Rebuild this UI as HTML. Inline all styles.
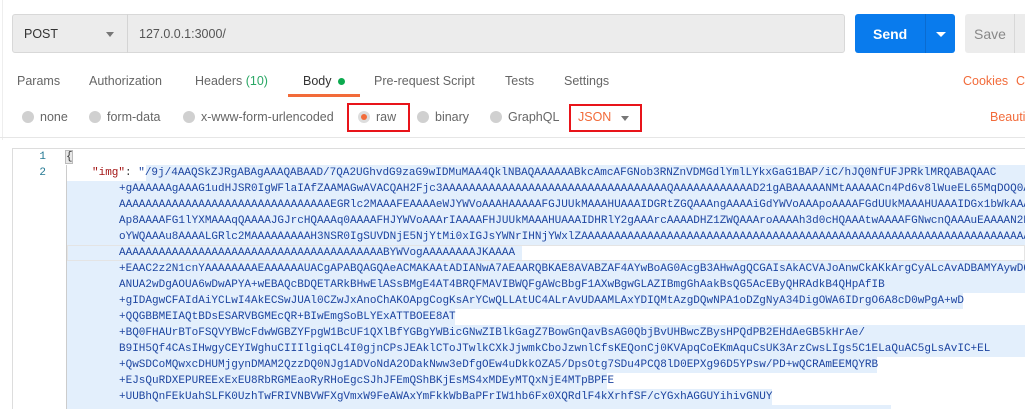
<!DOCTYPE html>
<html><head><meta charset="utf-8"><style>
*{margin:0;padding:0;box-sizing:border-box}
html,body{width:1025px;height:409px;overflow:hidden}
body{background:#fff;font-family:"Liberation Sans",sans-serif;position:relative;color:#505050}
#wrap{position:absolute;left:0;top:0;width:1025px;height:409px;overflow:hidden}
.a{position:absolute;white-space:nowrap}
.t{font-size:12.5px;color:#666}
.r{width:12px;height:12px;border-radius:50%;background:#d0d0d0;position:absolute}
.code{position:absolute;left:0;top:0;width:1025px;height:409px;overflow:hidden;font-family:"Liberation Mono",monospace;font-size:11px;color:#1d45a0}
.ln{position:absolute;height:16px;line-height:16px;white-space:nowrap}
.sel{position:absolute;height:16px;background:#e3effc}
.num{position:absolute;width:40px;text-align:right;font-family:"Liberation Mono",monospace;font-size:11px;color:#237893;line-height:16px}
</style></head><body><div id="wrap">
<div class="a" style="left:2px;top:0;width:1px;height:140px;background:#eee"></div>
<div class="a" style="left:12px;top:14px;width:833px;height:39px;background:#ececec;border:1px solid #d8d8d8;border-radius:3px"></div>
<div class="a" style="left:127px;top:14px;width:1px;height:39px;background:#d4d4d4"></div>
<div class="a" style="left:24px;top:27px;font-size:12.5px;color:#333">POST</div>
<div class="a" style="left:106px;top:32px;border-left:4px solid transparent;border-right:4px solid transparent;border-top:5px solid #777"></div>
<div class="a" style="left:139px;top:27px;font-size:12.5px;color:#555">127.0.0.1:3000/</div>
<div class="a" style="left:855px;top:14px;width:100px;height:39px;background:#097bed;border-radius:3px"></div>
<div class="a" style="left:925px;top:14px;width:1px;height:39px;background:#0a6bd0"></div>
<div class="a" style="left:873px;top:26px;font-size:14px;font-weight:bold;color:#fff">Send</div>
<div class="a" style="left:936px;top:32px;border-left:5px solid transparent;border-right:5px solid transparent;border-top:5px solid #fff"></div>
<div class="a" style="left:965px;top:14px;width:60px;height:39px;background:#ececec;border-radius:3px 0 0 3px"></div>
<div class="a" style="left:1014px;top:14px;width:1px;height:39px;background:#d8d8d8"></div>
<div class="a" style="left:974px;top:26px;font-size:14px;color:#888">Save</div>
<div class="a t" style="left:17px;top:74px">Params</div>
<div class="a t" style="left:89px;top:74px">Authorization</div>
<div class="a t" style="left:195px;top:74px">Headers <span style="color:#2aa765">(10)</span></div>
<div class="a t" style="left:303px;top:74px;color:#333">Body</div>
<div class="a" style="left:338px;top:78px;width:7px;height:7px;border-radius:50%;background:#0caa4f"></div>
<div class="a" style="left:288px;top:94px;width:72px;height:3px;background:#f26b3a"></div>
<div class="a t" style="left:374px;top:74px">Pre-request Script</div>
<div class="a t" style="left:505px;top:74px">Tests</div>
<div class="a t" style="left:564px;top:74px">Settings</div>
<div class="a t" style="left:963px;top:74px;color:#f26b3a">Cookies</div>
<div class="a t" style="left:1016px;top:74px;color:#f26b3a">Co</div>
<div class="r" style="left:22px;top:111px"></div><div class="a t" style="left:40px;top:110px">none</div>
<div class="r" style="left:89px;top:111px"></div><div class="a t" style="left:107px;top:110px">form-data</div>
<div class="r" style="left:183px;top:111px"></div><div class="a t" style="left:201px;top:110px">x-www-form-urlencoded</div>
<div class="r" style="left:358px;top:111px;background:#ddd"></div><div class="a" style="left:361px;top:114px;width:6px;height:6px;border-radius:50%;background:#f26b3a"></div>
<div class="a t" style="left:376px;top:110px">raw</div>
<div class="a" style="left:347px;top:103px;width:63px;height:29px;border:2px solid #e8141a"></div>
<div class="r" style="left:417px;top:111px"></div><div class="a t" style="left:435px;top:110px">binary</div>
<div class="r" style="left:490px;top:111px"></div><div class="a t" style="left:508px;top:110px">GraphQL</div>
<div class="a" style="left:569px;top:104px;width:73px;height:28px;border:2px solid #e8141a"></div>
<div class="a t" style="left:578px;top:110px;color:#f26b3a">JSON</div>
<div class="a" style="left:621px;top:116px;border-left:4px solid transparent;border-right:4px solid transparent;border-top:5px solid #777"></div>
<div class="a t" style="left:990px;top:110px;color:#f26b3a">Beauti</div>
<div class="a" style="left:0;top:137px;width:1025px;height:1px;background:#e6e6e6"></div>
<div class="a" style="left:12px;top:148px;width:1013px;height:261px;border-top:1px solid #ddd;border-left:1px solid #ddd"></div>
<div class="a" style="left:66px;top:165px;width:1px;height:244px;background:#ccc"></div>
<div class="num" style="left:6px;top:149px">1</div>
<div class="num" style="left:6px;top:165px">2</div>
<div class="sel" style="left:146px;top:165px;width:879px"></div>
<div class="sel" style="left:67px;top:181px;width:958px"></div>
<div class="sel" style="left:67px;top:197px;width:958px"></div>
<div class="sel" style="left:67px;top:213px;width:958px"></div>
<div class="sel" style="left:67px;top:229px;width:958px"></div>
<div class="sel" style="left:67px;top:245px;width:455px"></div>
<div class="a" style="left:67px;top:245px;width:958px;height:16px;border:1px solid #e4e4e4"></div>
<div class="sel" style="left:67px;top:261px;width:958px"></div>
<div class="sel" style="left:67px;top:277px;width:958px"></div>
<div class="sel" style="left:67px;top:293px;width:896px"></div>
<div class="sel" style="left:67px;top:309px;width:388px"></div>
<div class="sel" style="left:67px;top:325px;width:958px"></div>
<div class="sel" style="left:67px;top:341px;width:958px"></div>
<div class="sel" style="left:67px;top:357px;width:810px"></div>
<div class="sel" style="left:67px;top:373px;width:540px"></div>
<div class="sel" style="left:67px;top:389px;width:705px"></div>
<div class="sel" style="left:67px;top:405px;width:824px;height:4px"></div>
<div class="a" style="left:65px;top:150px;width:8px;height:14px;background:#e8e8e8;border:1px solid #bbb"></div>
<div class="code">
<div class="ln" style="left:66px;top:149px;color:#333">{</div>
<div class="ln" style="left:92px;top:165px"><span style="color:#a31515">"img"</span><span style="color:#333">: </span>"/9j/4AAQSkZJRgABAgAAAQABAAD/7QA2UGhvdG9zaG9wIDMuMAA4QklNBAQAAAAAABkcAmcAFGNob3RNZnVDMGdlYmlLYkxGaG1BAP/iC/hJQ0NfUFJPRklMRQABAQAAC</div>
<div class="ln" style="left:119px;top:181px">+gAAAAAAgAAAG1udHJSR0IgWFlaIAfZAAMAGwAVACQAH2Fjc3AAAAAAAAAAAAAAAAAAAAAAAAAAAAAAAAAAQAAAAAAAAAAAAD21gABAAAAANMtAAAAACn4Pd6v8lWueEL65MqDOQ0AAAAAAAA</div>
<div class="ln" style="left:119px;top:197px">AAAAAAAAAAAAAAAAAAAAAAAAAAAAAAAAEGRlc2MAAAFEAAAAeWJYWVoAAAHAAAAAFGJUUkMAAAHUAAAIDGRtZGQAAAngAAAAiGdYWVoAAApoAAAAFGdUUkMAAAHUAAAIDGx1bWkAAAp</div>
<div class="ln" style="left:119px;top:213px">Ap8AAAAFG1lYXMAAAqQAAAAJGJrcHQAAAq0AAAAFHJYWVoAAArIAAAAFHJUUkMAAAHUAAAIDHRlY2gAAArcAAAADHZ1ZWQAAAroAAAAh3d0cHQAAAtwAAAAFGNwcnQAAAuEAAAAN2NocmQAAAu8</div>
<div class="ln" style="left:119px;top:229px">oYWQAAAu8AAAALGRlc2MAAAAAAAAAH3NSR0IgSUVDNjE5NjYtMi0xIGJsYWNrIHNjYWxlZAAAAAAAAAAAAAAAAAAAAAAAAAAAAAAAAAAAAAAAAAAAAAAAAAAAAAAAAAAAAAAAAAAAAAAA</div>
<div class="ln" style="left:119px;top:245px">AAAAAAAAAAAAAAAAAAAAAAAAAAAAAAAAAAAAAAAABYWVogAAAAAAAAJKAAAA</div>
<div class="ln" style="left:119px;top:261px">+EAAC2z2N1cnYAAAAAAAAEAAAAAAUACgAPABQAGQAeACMAKAAtADIANwA7AEAARQBKAE8AVABZAF4AYwBoAG0AcgB3AHwAgQCGAIsAkACVAJoAnwCkAKkArgCyALcAvADBAMYAywDQ</div>
<div class="ln" style="left:119px;top:277px">ANUA2wDgAOUA6wDwAPYA+wEBAQcBDQETARkBHwElASsBMgE4AT4BRQFMAVIBWQFgAWcBbgF1AXwBgwGLAZIBmgGhAakBsQG5AcEByQHRAdkB4QHpAfIB</div>
<div class="ln" style="left:119px;top:293px">+gIDAgwCFAIdAiYCLwI4AkECSwJUAl0CZwJxAnoChAKOApgCogKsArYCwQLLAtUC4ALrAvUDAAMLAxYDIQMtAzgDQwNPA1oDZgNyA34DigOWA6IDrgO6A8cD0wPgA+wD</div>
<div class="ln" style="left:119px;top:309px">+QQGBBMEIAQtBDsESARVBGMEcQR+BIwEmgSoBLYExATTBOEE8AT</div>
<div class="ln" style="left:119px;top:325px">+BQ0FHAUrBToFSQVYBWcFdwWGBZYFpgW1BcUF1QXlBfYGBgYWBicGNwZIBlkGagZ7BowGnQavBsAG0QbjBvUHBwcZBysHPQdPB2EHdAeGB5kHrAe/</div>
<div class="ln" style="left:119px;top:341px">B9IH5Qf4CAsIHwgyCEYIWghuCIIIlgiqCL4I0gjnCPsJEAklCToJTwlkCXkJjwmkCboJzwnlCfsKEQonCj0KVApqCoEKmAquCsUK3ArzCwsLIgs5C1ELaQuAC5gLsAvIC+EL</div>
<div class="ln" style="left:119px;top:357px">+QwSDCoMQwxcDHUMjgynDMAM2QzzDQ0NJg1ADVoNdA2ODakNww3eDfgOEw4uDkkOZA5/DpsOtg7SDu4PCQ8lD0EPXg96D5YPsw/PD+wQCRAmEEMQYRB</div>
<div class="ln" style="left:119px;top:373px">+EJsQuRDXEPUREExExEU8RbRGMEaoRyRHoEgcSJhJFEmQShBKjEsMS4xMDEyMTQxNjE4MTpBPFE</div>
<div class="ln" style="left:119px;top:389px">+UUBhQnFEkUahSLFK0UzhTwFRIVNBVWFXgVmxW9FeAWAxYmFkkWbBaPFrIW1hb6Fx0XQRdlF4kXrhfSF/cYGxhAGGUYihivGNUY</div>
</div>
</div></body></html>
